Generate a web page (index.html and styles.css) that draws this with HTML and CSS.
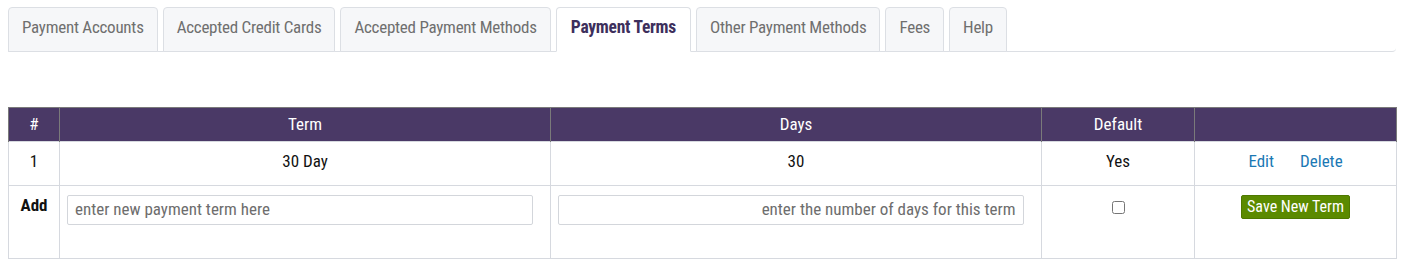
FILE: index.html
```html
<!DOCTYPE html>
<html lang="en">
<head>
    <meta charset="UTF-8">
    <title>Payment Terms</title>
    <link rel="stylesheet" href="styles.css">
</head>
<body>
    <div class="page">
        <ul class="tabs">
            <li class="tab">Payment Accounts</li>
            <li class="tab">Accepted Credit Cards</li>
            <li class="tab">Accepted Payment Methods</li>
            <li class="tab active">Payment Terms</li>
            <li class="tab">Other Payment Methods</li>
            <li class="tab">Fees</li>
            <li class="tab">Help</li>
        </ul>

        <table class="terms">
            <thead>
                <tr>
                    <th class="col-num">#</th>
                    <th class="col-term">Term</th>
                    <th class="col-days">Days</th>
                    <th class="col-default">Default</th>
                    <th class="col-actions"></th>
                </tr>
            </thead>
            <tbody>
                <tr class="row-term">
                    <td>1</td>
                    <td>30 Day</td>
                    <td>30</td>
                    <td>Yes</td>
                    <td class="actions"><a href="#">Edit</a><a href="#">Delete</a></td>
                </tr>
                <tr class="row-add">
                    <td class="add-label">Add</td>
                    <td><input type="text" class="field" placeholder="enter new payment term here"></td>
                    <td><input type="text" class="field right" placeholder="enter the number of days for this term"></td>
                    <td><input type="checkbox" class="check"></td>
                    <td><button class="save">Save New Term</button></td>
                </tr>
            </tbody>
        </table>
    </div>
</body>
</html>
```

FILE: styles.css
```css
* {
    margin: 0;
    padding: 0;
    box-sizing: border-box;
}

body {
    font-family: "Roboto Condensed", "Arial Narrow", "Liberation Sans Narrow", "DejaVu Sans Condensed", sans-serif;
    font-stretch: condensed;
    font-size: 17px;
    color: #111;
    background: #fff;
}

.page {
    padding: 7px 11px 0 8px;
}

/* Pestañas */
.tabs {
    list-style: none;
    display: flex;
    gap: 5px;
    border-bottom: 1px solid #dcdfe4;
    border-bottom-right-radius: 4px;
    height: 45px;
}

.tab {
    height: 45px;
    padding: 0 13px 5px;
    display: flex;
    align-items: center;
    background: #f6f7f9;
    border: 1px solid #dcdfe4;
    border-radius: 4px 4px 0 0;
    color: #6f6f6f;
    font-size: 17px;
    letter-spacing: -0.25px;
}

.tab.active {
    background: #fff;
    border-bottom-color: #fff;
    color: #3d2f5c;
    font-weight: bold;
    font-size: 17.5px;
    padding: 0 14px 5px;
}

/* Tabla de términos */
.terms {
    margin-top: 55px;
    width: 1388px;
    border-collapse: collapse;
    table-layout: fixed;
    text-align: center;
}

.col-num { width: 51px; }
.col-term { width: 491px; }
.col-days { width: 491px; }
.col-default { width: 153px; }
.col-actions { width: 202px; }

.terms th {
    height: 34px;
    padding-bottom: 2px;
    background: #4a3966;
    color: #fff;
    font-weight: normal;
    border: 1px solid #7a7a7a;
    border-bottom: none;
}

.terms td {
    border: 1px solid #d6d9df;
}

.row-term td {
    height: 44px;
    padding-bottom: 5px;
}

.row-add td {
    height: 73px;
    vertical-align: top;
    padding-top: 9px;
}

.add-label {
    font-weight: bold;
    padding-top: 9px !important;
}

.actions a {
    color: #1b78b4;
    text-decoration: none;
    margin: 0 13px;
}

.field {
    display: block;
    width: 95%;
    height: 30px;
    margin-left: 7px;
    padding: 0 7px 3px;
    border: 1px solid #d3d6db;
    border-radius: 2px;
    font-family: inherit;
    font-stretch: inherit;
    font-size: 17px;
    color: #333;
}

.field::placeholder {
    color: #6d6d6d;
}

.field.right {
    text-align: right;
}

.check {
    width: 13px;
    height: 13px;
    margin-top: 6px;
}

.save {
    height: 24px;
    padding: 0 5px 2px;
    background: #5b8a00;
    color: #fff;
    border: 1px solid #4e7800;
    border-radius: 2px;
    font-family: inherit;
    font-stretch: inherit;
    font-size: 16px;
}
```
